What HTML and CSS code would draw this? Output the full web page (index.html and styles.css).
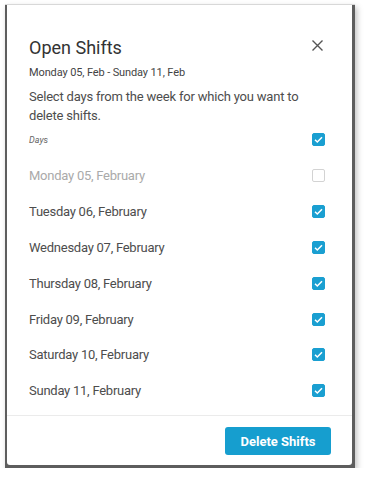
FILE: index.html
```html
<!DOCTYPE html>
<html>
<head>
<meta charset="utf-8">
<link rel="stylesheet" href="styles.css">
</head>
<body>
<div class="frame">
  <div class="modal">
    <div class="header">
      <div class="titles">
        <h1 class="title">Open Shifts</h1>
        <div class="subtitle">Monday 05, Feb - Sunday 11, Feb</div>
      </div>
      <button class="close" aria-label="Close">
        <svg width="11" height="11" viewBox="0 0 11 11"><path d="M0.5 0.5L10.5 10.5M10.5 0.5L0.5 10.5" stroke="#555" stroke-width="1.4" fill="none"/></svg>
      </button>
    </div>
    <p class="desc">Select days from the week for which you want to delete shifts.</p>
    <div class="list">
      <div class="row head-row"><span class="days">Days</span><span class="cb on"></span></div>
      <div class="row disabled"><span>Monday 05, February</span><span class="cb"></span></div>
      <div class="row"><span>Tuesday 06, February</span><span class="cb on"></span></div>
      <div class="row"><span>Wednesday 07, February</span><span class="cb on"></span></div>
      <div class="row"><span>Thursday 08, February</span><span class="cb on"></span></div>
      <div class="row"><span>Friday 09, February</span><span class="cb on"></span></div>
      <div class="row"><span>Saturday 10, February</span><span class="cb on"></span></div>
      <div class="row"><span>Sunday 11, February</span><span class="cb on"></span></div>
    </div>
    <div class="footer">
      <button class="primary">Delete Shifts</button>
    </div>
  </div>
</div>
</body>
</html>
```
FILE: styles.css
```css
html, body { margin: 0; padding: 0; background: #fff; }
body { font-family: Roboto, "Noto Sans", sans-serif; }
.frame {
  margin: 4px 0 0 5px;
  width: 350px;
  height: 464px;
  background: #5d5d5d;
  box-shadow: 2px 3px 6px rgba(0,0,0,0.25);
  border-top: 1px solid #d8d8d8;
  box-sizing: border-box;
  padding: 0 3px 3px 2px;
  display: flex;
}
.modal {
  flex: 1;
  background: #fff;
  border-radius: 0 0 3px 3px;
  display: flex;
  flex-direction: column;
}
.header {
  display: flex;
  justify-content: space-between;
  align-items: flex-start;
  padding: 32px 29px 0 22px;
}
.title {
  margin: 0;
  font-size: 18px;
  font-weight: 400;
  line-height: 22px;
  color: #333;
}
.subtitle {
  margin-top: 7px;
  font-size: 11px;
  line-height: 13px;
  letter-spacing: -0.12px;
  color: #444;
}
.close {
  border: 0; background: none; padding: 0; margin-top: 3px;
  width: 11px; height: 11px; display: flex;
}
.desc {
  margin: 9px 28px 0 22px;
  font-size: 13px;
  line-height: 18.5px;
  letter-spacing: -0.2px;
  color: #4d4d4d;
}
.list {
  margin-top: 7px;
  padding: 0 27px 0 22px;
  display: flex;
  flex-direction: column;
}
.row {
  display: flex;
  justify-content: space-between;
  align-items: center;
  height: 35.8px;
  font-size: 13px;
  letter-spacing: -0.25px;
  color: #4d4d4d;
}
.head-row { height: 25px; align-items: flex-start; padding-top: 1px; }
.days { font-size: 9px; font-style: italic; color: #666; margin-top: 2px; letter-spacing: 0; }
.disabled { color: #aaa; }
.cb {
  width: 13px; height: 13px;
  border: 1px solid #d3d3d3;
  border-radius: 2px;
  box-sizing: border-box;
  background: #fff;
  display: block;
}
.cb.on {
  background: #1a9fd1 url("data:image/svg+xml,%3Csvg xmlns='http://www.w3.org/2000/svg' viewBox='0 0 13 13'%3E%3Cpath d='M3 6.7L5.3 9 10 4.2' stroke='%23fff' stroke-width='1.5' fill='none'/%3E%3C/svg%3E") center/13px 13px no-repeat;
  border-color: #1a9fd1;
}
.footer {
  margin-top: auto;
  border-top: 1px solid #ebebeb;
  display: flex;
  justify-content: flex-end;
  padding: 11px 21px 10px 0;
}
.primary {
  background: #169ecf;
  color: #fff;
  border: 0;
  border-radius: 3px;
  width: 106px;
  height: 28px;
  font-family: Roboto, sans-serif;
  font-weight: 700;
  font-size: 13px;
}
```
